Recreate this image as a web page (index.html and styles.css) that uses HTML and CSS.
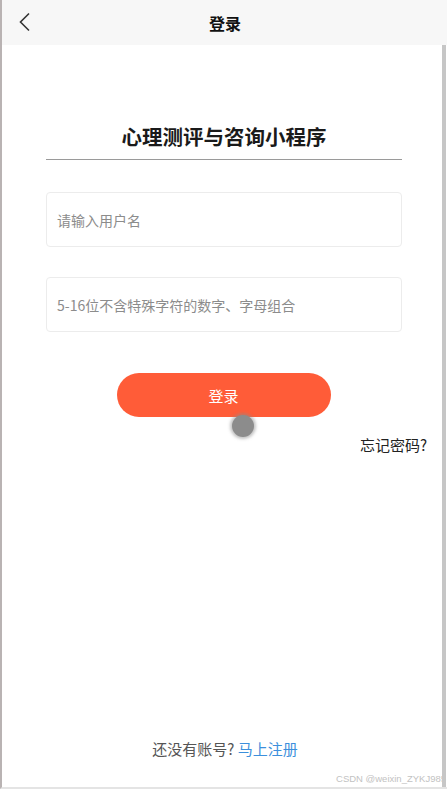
FILE: index.html
```html
<!DOCTYPE html>
<html lang="zh">
<head>
<meta charset="utf-8">
<title>登录</title>
<link rel="stylesheet" href="styles.css">
</head>
<body>
<div class="frame">
  <header class="topbar">
    <span class="back">
      <svg width="14" height="20" viewBox="0 0 14 20"><path d="M11 1.5 L2.5 10 L11 18.5" fill="none" stroke="#333" stroke-width="1.6"/></svg>
    </span>
    <h1 class="title">登录</h1>
  </header>
  <div class="body-row">
    <main class="content">
      <h2 class="app-name">心理测评与咨询小程序</h2>
      <div class="rule"></div>
      <div class="field"><span class="placeholder">请输入用户名</span></div>
      <div class="field"><span class="placeholder">5-16位不含特殊字符的数字、字母组合</span></div>
      <div class="btn-wrap">
        <button class="login-btn">登录</button>
        <span class="touch"></span>
      </div>
      <div class="forgot">忘记密码?</div>
      <div class="spacer"></div>
      <div class="register">还没有账号? <a class="reg-link">马上注册</a></div>
      <div class="watermark">CSDN @weixin_ZYKJ985</div>
    </main>
    <div class="scrollbar"></div>
  </div>
</div>
</body>
</html>
```

FILE: styles.css
```css
* { box-sizing: border-box; }
html, body { margin: 0; padding: 0; }
body {
  width: 447px;
  height: 789px;
  overflow: hidden;
  background: #fff;
  font-family: "Noto Sans CJK SC", "Noto Sans", sans-serif;
  color: #333;
}
.frame {
  height: 789px;
  border-left: 2px solid #b9b3b3;
  border-bottom: 2px solid #e4e4e4;
  display: flex;
  flex-direction: column;
}
.topbar {
  height: 45px;
  flex: none;
  background: #f7f7f7;
  display: flex;
  align-items: center;
  justify-content: center;
  position: relative;
}
.back {
  position: absolute;
  left: 16px;
  top: 12px;
  display: flex;
}
.title {
  margin: 0;
  font-size: 16px;
  font-weight: 700;
  color: #111;
  line-height: 20px;
  margin-left: 1px;
}
.body-row {
  flex: 1;
  display: flex;
  min-height: 0;
}
.content {
  flex: 1;
  position: relative;
  display: flex;
  flex-direction: column;
  padding: 0 40px 0 44px;
}
.scrollbar {
  width: 4px;
  margin-right: 1px;
  background: #c6c6c6;
  flex: none;
  position: relative;
  z-index: 2;
}
.app-name {
  margin: 76px 0 0;
  text-align: center;
  font-size: 20.5px;
  font-weight: 700;
  line-height: 30px;
  color: #1a1a1a;
}
.rule {
  height: 1px;
  background: #9a9a9a;
  margin-top: 8px;
}
.field {
  height: 55px;
  border: 1px solid #ececec;
  border-radius: 4px;
  margin-top: 32px;
  display: flex;
  align-items: center;
  padding-left: 10px;
}
.field + .field { margin-top: 30px; }
.placeholder {
  font-size: 14px;
  color: #8c8c8c;
}
.btn-wrap {
  position: relative;
  display: flex;
  justify-content: center;
  margin-top: 41px;
  padding-right: 1px;
}
.login-btn {
  width: 214px;
  height: 44px;
  border: none;
  border-radius: 22px;
  background: #ff5c38;
  color: #fff;
  font-family: inherit;
  font-size: 15px;
  padding: 0;
}
.touch {
  position: absolute;
  left: 186px;
  top: 42px;
  width: 22px;
  height: 22px;
  border-radius: 50%;
  background: #8c8c8c;
  box-shadow: 0 0 3px 2px rgba(140,140,140,0.5);
}
.forgot {
  align-self: flex-end;
  margin-right: -25px;
  margin-top: 18px;
  font-size: 15px;
  color: #222;
  line-height: 20px;
}
.spacer { flex: 1; }
.register {
  text-align: center;
  font-size: 15px;
  color: #555;
  line-height: 20px;
  margin-bottom: 28px;
  margin-right: -2px;
}
.reg-link { color: #3c8fdc; }
.watermark {
  position: absolute;
  right: -4px;
  bottom: 3px;
  font-family: "Liberation Sans", sans-serif;
  font-size: 9.5px;
  color: #c2c2c2;
  white-space: nowrap;
}
```
